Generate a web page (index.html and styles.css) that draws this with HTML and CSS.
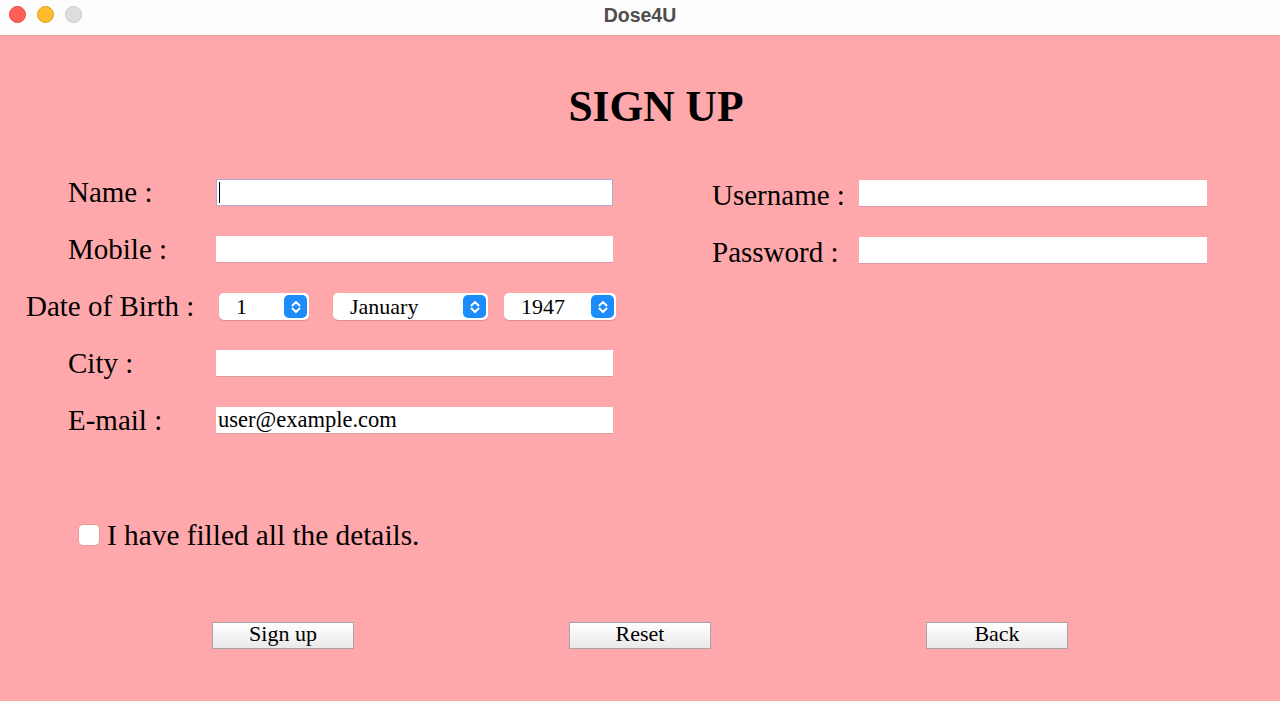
FILE: index.html
```html
<!DOCTYPE html>
<html lang="en">
<head>
<meta charset="utf-8">
<title>Dose4U</title>
<link rel="stylesheet" href="styles.css">
</head>
<body>
<div class="window">
  <header class="titlebar">
    <div class="lights">
      <span class="light red"></span>
      <span class="light yellow"></span>
      <span class="light gray"></span>
    </div>
    <div class="wintitle">Dose4U</div>
  </header>
  <main class="content">
    <h1 class="heading">SIGN UP</h1>
    <div class="form">
      <div class="col-left">
        <label class="label indent">Name :</label>
        <div class="field focused"><span class="caret"></span></div>

        <label class="label indent">Mobile :</label>
        <div class="field"></div>

        <label class="label">Date of Birth :</label>
        <div class="dob">
          <div class="select day"><span class="sel-text">1</span><span class="stepper"><svg width="14" height="16" viewBox="0 0 14 16"><path d="M3.5 6.5 L7 3 L10.5 6.5 M3.5 9.5 L7 13 L10.5 9.5" fill="none" stroke="#fff" stroke-width="2" stroke-linecap="round" stroke-linejoin="round"/></svg></span></div>
          <div class="select month"><span class="sel-text">January</span><span class="stepper"><svg width="14" height="16" viewBox="0 0 14 16"><path d="M3.5 6.5 L7 3 L10.5 6.5 M3.5 9.5 L7 13 L10.5 9.5" fill="none" stroke="#fff" stroke-width="2" stroke-linecap="round" stroke-linejoin="round"/></svg></span></div>
          <div class="select year"><span class="sel-text">1947</span><span class="stepper"><svg width="14" height="16" viewBox="0 0 14 16"><path d="M3.5 6.5 L7 3 L10.5 6.5 M3.5 9.5 L7 13 L10.5 9.5" fill="none" stroke="#fff" stroke-width="2" stroke-linecap="round" stroke-linejoin="round"/></svg></span></div>
        </div>

        <label class="label indent">City :</label>
        <div class="field"></div>

        <label class="label indent">E-mail :</label>
        <div class="field"><span class="value">user@example.com</span></div>
      </div>
      <div class="col-right">
        <label class="label shifted">Username :</label>
        <div class="field"></div>
        <label class="label shifted">Password :</label>
        <div class="field"></div>
      </div>
    </div>
    <div class="agree">
      <span class="checkbox"></span>
      <span class="agree-text">I have filled all the details.</span>
    </div>
    <div class="buttons">
      <button class="btn">Sign up</button>
      <button class="btn">Reset</button>
      <button class="btn">Back</button>
    </div>
  </main>
</div>
</body>
</html>
```

FILE: styles.css
```css
* { box-sizing: border-box; }
html, body {
  margin: 0;
  padding: 0;
  height: 100%;
}
body {
  font-family: "Liberation Serif", "Times New Roman", serif;
  color: #000;
  background: #ffa8ab;
}
.window {
  width: 1280px;
  height: 701px;
  display: flex;
  flex-direction: column;
  overflow: hidden;
}
.titlebar {
  height: 36px;
  background: #fdfdfd;
  border-bottom: 1px solid #eba3a6;
  display: flex;
  align-items: center;
  position: relative;
}
.lights {
  display: flex;
  gap: 11px;
  padding-left: 9px;
  margin-top: -6px;
}
.light {
  width: 17px;
  height: 17px;
  border-radius: 50%;
  display: block;
}
.light.red { background: #fe5f57; border: 1px solid #e5473f; }
.light.yellow { background: #febc2e; border: 1px solid #e0a024; }
.light.gray { background: #dedede; border: 1px solid #c9c9c9; }
.wintitle {
  position: absolute;
  left: 0;
  right: 0;
  top: 5px;
  text-align: center;
  font-family: "Liberation Sans", Arial, sans-serif;
  font-weight: bold;
  font-size: 19.5px;
  color: #4e4e4e;
  line-height: 20px;
}
.content {
  flex: 1;
  background: #ffa8ab;
}
.heading {
  margin: 49px 0 0 0;
  text-align: center;
  font-size: 43.5px;
  line-height: 43px;
  font-weight: bold;
  padding-left: 32px;
}
.form {
  display: flex;
  margin-top: 51px;
  padding-left: 26px;
}
.col-left {
  display: grid;
  grid-template-columns: 190px 400px;
  grid-auto-rows: 27px;
  row-gap: 30px;
  align-items: center;
}
.col-right {
  display: grid;
  grid-template-columns: 147px 348px;
  grid-auto-rows: 27px;
  row-gap: 30px;
  align-items: center;
  margin-left: 96px;
  padding-top: 1px;
}
.label {
  font-size: 29px;
  line-height: 27px;
  white-space: nowrap;
}
.label.indent { padding-left: 42px; }
.label.shifted { padding-top: 4px; }
.field {
  width: 397px;
  height: 27px;
  background: #fff;
  border-bottom: 1px solid #d99ca0;
  display: flex;
  align-items: center;
  padding-left: 2px;
}
.col-right .field { width: 348px; }
.field.focused {
  border: 1px solid #a7abd6;
  padding-left: 2px;
}
.caret {
  display: block;
  width: 1px;
  height: 21px;
  background: #000;
}
.value {
  font-size: 22.5px;
  line-height: 26px;
}
.dob {
  display: flex;
  align-items: center;
  padding-left: 3px;
}
.select {
  height: 27px;
  background: #fff;
  border-radius: 5px;
  box-shadow: 0 1px 1px rgba(160, 80, 80, 0.35);
  display: flex;
  align-items: center;
  justify-content: space-between;
  padding: 0 2px 0 17px;
}
.select.day { width: 90px; }
.select.month { width: 155px; margin-left: 24px; }
.select.year { width: 112px; margin-left: 16px; }
.sel-text {
  font-size: 22px;
  line-height: 26px;
}
.stepper {
  width: 23px;
  height: 23px;
  border-radius: 5px;
  background: #1c8cfb;
  display: flex;
  align-items: center;
  justify-content: center;
}
.stepper svg { display: block; }
.agree {
  display: flex;
  align-items: center;
  margin-top: 91px;
  padding-left: 79px;
  height: 20px;
}
.checkbox {
  width: 20px;
  height: 20px;
  background: #fff;
  border-radius: 4px;
  box-shadow: 0 0 0 0.5px rgba(170, 110, 110, 0.5);
  display: block;
}
.agree-text {
  font-size: 29.3px;
  line-height: 30px;
  margin-left: 8px;
}
.buttons {
  display: flex;
  gap: 215px;
  margin-top: 77px;
  padding-left: 212px;
}
.btn {
  width: 142px;
  height: 27px;
  background: linear-gradient(#ffffff, #e9e9e9);
  border: 1px solid #a8a3a4;
  border-radius: 0;
  font-family: "Liberation Serif", "Times New Roman", serif;
  font-size: 22px;
  line-height: 22px;
  color: #000;
  padding: 0 0 3px 0;
}
```
